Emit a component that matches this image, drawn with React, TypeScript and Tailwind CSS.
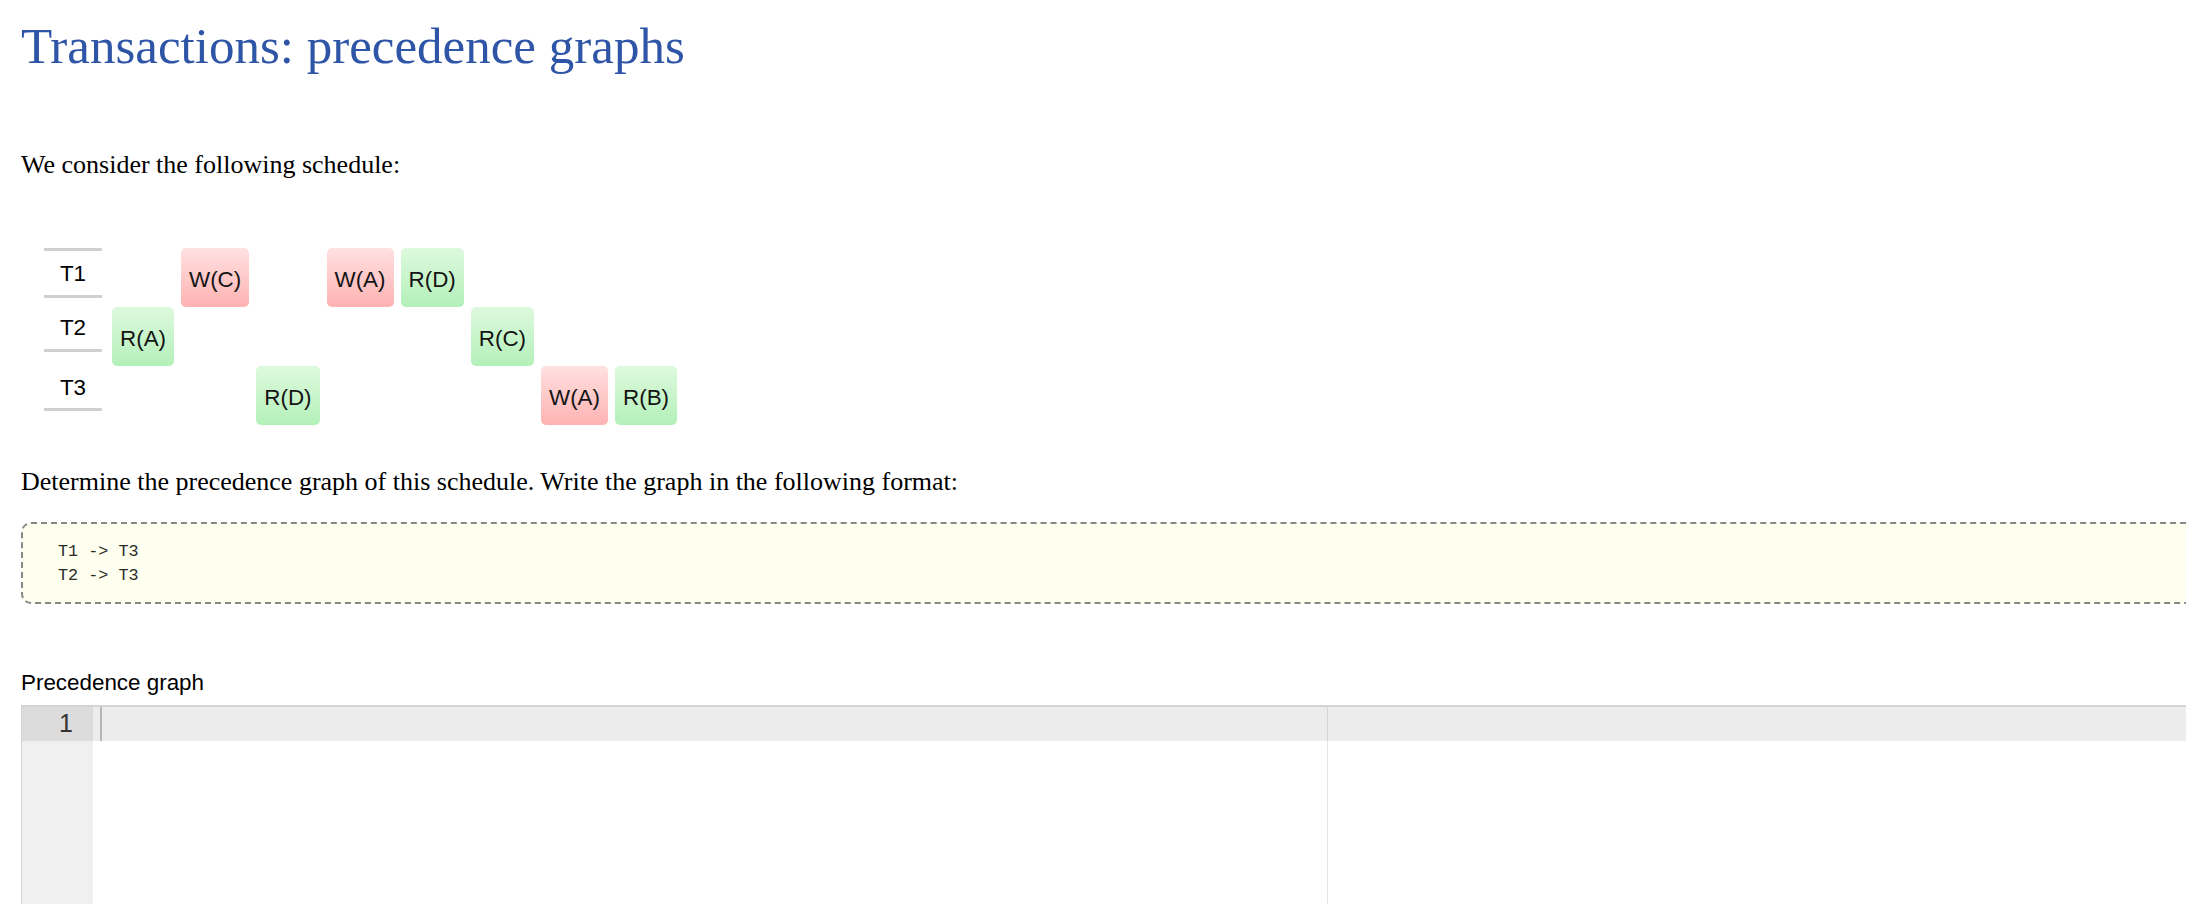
import React from 'react'

type Op = { label: string; kind: 'r' | 'w'; pos: string }

// one box per step of the schedule, placed on its transaction's row
const OPS: Op[] = [
  { label: 'R(A)', kind: 'r', pos: 'col-start-1 row-start-2' },
  { label: 'W(C)', kind: 'w', pos: 'col-start-2 row-start-1' },
  { label: 'R(D)', kind: 'r', pos: 'col-start-3 row-start-3' },
  { label: 'W(A)', kind: 'w', pos: 'col-start-4 row-start-1' },
  { label: 'R(D)', kind: 'r', pos: 'col-start-5 row-start-1' },
  { label: 'R(C)', kind: 'r', pos: 'col-start-6 row-start-2' },
  { label: 'W(A)', kind: 'w', pos: 'col-start-7 row-start-3' },
  { label: 'R(B)', kind: 'r', pos: 'col-start-8 row-start-3' },
]

const LABELS = [
  { name: 'T1', cls: 'h-[47px] pb-[9px]' },
  { name: 'T2', cls: 'h-[54px] pb-[9px]' },
  { name: 'T3', cls: 'h-[59px] pb-[8px]' },
]

function Schedule() {
  return (
    <div className="flex items-start mt-[68px] font-['Liberation_Sans',Arial,sans-serif] text-[22.4px]">
      <div className="ml-[23px] w-[58px] border-t-[3px] border-[#cfcfcf]">
        {LABELS.map(l => (
          <div key={l.name}
            className={`box-border flex items-end justify-center border-b-[3px] border-[#cfcfcf] leading-[25px] text-black ${l.cls}`}>
            {l.name}
          </div>
        ))}
      </div>
      <div className="ml-[10px] grid grid-rows-[repeat(3,59px)] gap-x-[7px]">
        {OPS.map((op, i) => (
          <div key={i}
            className={`${op.pos} h-[59px] px-[8px] pt-[3px] rounded-[5px] flex items-center justify-center leading-[25px] text-[#141414] ${
              op.kind === 'w'
                ? 'bg-linear-to-b from-[#ffe1e1] to-[#ffb2b2]'
                : 'bg-linear-to-b from-[#def9de] to-[#b3f0b9]'
            }`}>
            {op.label}
          </div>
        ))}
      </div>
    </div>
  )
}

function Editor() {
  return (
    <div className="mt-[9px] h-[230px] border-t-2 border-l border-[#d4d4d4] flex">
      <div className="w-[71px] shrink-0 bg-[#f0f0f0]">
        <div className="h-[34px] bg-[#dcdcdc] flex items-center justify-end pr-[20px] font-['Liberation_Sans',Arial,sans-serif] text-[25px] text-[#333]">
          1
        </div>
      </div>
      <div className="relative flex-1">
        <div className="h-[34px] bg-[#ececec] pl-[7px]">
          <div className="w-[2px] h-[34px] bg-[#b4b4b4]" />
        </div>
        {/* print margin */}
        <div className="absolute top-0 bottom-0 left-[1234px] w-px bg-black/[0.1]" />
      </div>
    </div>
  )
}

export default function App() {
  return (
    <div className="w-[2186px] h-[904px] overflow-hidden bg-white">
      <div className="w-[2300px] pl-[21px] font-['Liberation_Serif','Times_New_Roman',serif] text-black">
        <h1 className="pt-[17px] text-[51px] leading-[58px] text-[#2f55a6] font-normal">
          Transactions: precedence graphs
        </h1>

        <p className="mt-[75px] text-[26px] leading-[30px]">We consider the following schedule:</p>

        <Schedule />

        <p className="mt-[42px] text-[26px] leading-[30px]">
          Determine the precedence graph of this schedule. Write the graph in the following format:
        </p>

        <div className="mt-[25px] h-[82px] box-border border-2 border-dashed border-[#888] rounded-[10px] bg-[#ffffef] pl-[35px] pt-[16px]">
          <pre className="font-['Liberation_Mono','Courier_New',monospace] text-[16.8px] leading-[23.5px] text-[#2a2a2a]">
{`T1 -> T3
T2 -> T3`}
          </pre>
        </div>

        <div className="mt-[66px] font-['Liberation_Sans',Arial,sans-serif] text-[22.4px] leading-[26px]">
          Precedence graph
        </div>

        <Editor />
      </div>
    </div>
  )
}
